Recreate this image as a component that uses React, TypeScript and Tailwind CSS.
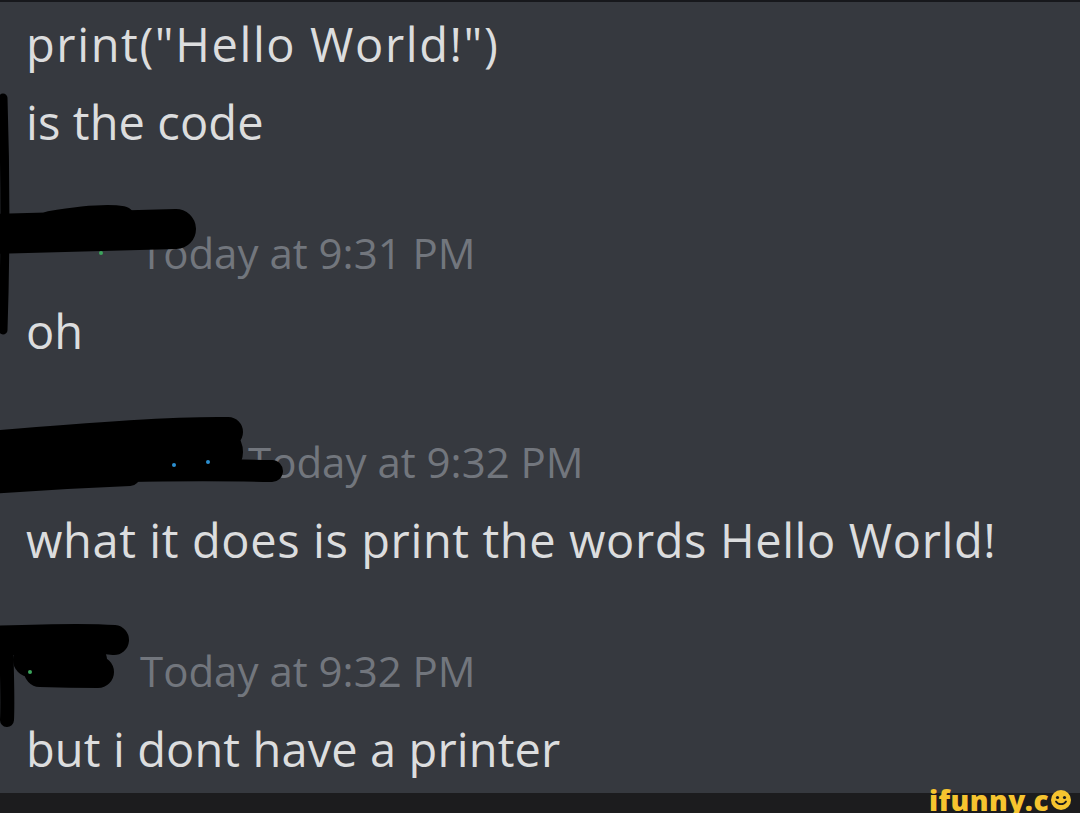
import React from 'react';

type Msg = {
  nameWidth: number;
  time: string;
  lines: string[];
};

const messages: Msg[] = [
  { nameWidth: 0, time: '', lines: ['print("Hello World!")', 'is the code'] },
  { nameWidth: 114, time: 'Today at 9:31 PM', lines: ['oh'] },
  { nameWidth: 222, time: 'Today at 9:32 PM', lines: ['what it does is print the words Hello World!'] },
  { nameWidth: 114, time: 'Today at 9:32 PM', lines: ['but i dont have a printer'] },
];

// the black marker redactions drawn over usernames / avatars
function Scribbles() {
  return (
    <svg
      className="absolute inset-0 pointer-events-none"
      width="1080"
      height="813"
      viewBox="0 0 1080 813"
      fill="none"
      stroke="#000"
      strokeLinecap="round"
      strokeLinejoin="round"
    >
      {/* left edge stroke */}
      <path d="M3 98 C 5 160, 6 240, 3 330" strokeWidth="9" />
      {/* first name */}
      <path d="M-10 234 C 60 232, 130 230, 176 229" strokeWidth="40" />
      <path d="M50 224 C 80 219, 105 216, 122 219" strokeWidth="26" />
      <circle cx="101" cy="253" r="2" fill="#3ba55c" stroke="none" />
      {/* second name */}
      <path d="M-10 462 C 60 456, 140 452, 215 452" strokeWidth="56" />
      <path d="M-10 446 C 80 438, 170 431, 228 432" strokeWidth="30" />
      <path d="M120 471 C 180 470, 230 470, 272 471" strokeWidth="22" />
      <path d="M-10 484 C 30 481, 80 478, 130 476" strokeWidth="20" />
      <circle cx="174" cy="465" r="2" fill="#2b8fd0" stroke="none" />
      <circle cx="208" cy="462" r="2" fill="#2b8fd0" stroke="none" />
      {/* third name */}
      <path d="M-10 641 C 40 639, 90 638, 114 640" strokeWidth="30" />
      <path d="M30 660 C 60 660, 80 660, 90 660" strokeWidth="34" />
      <path d="M40 671 C 70 672, 90 672, 98 672" strokeWidth="32" />
      <path d="M6 640 C 7 670, 8 700, 7 720" strokeWidth="14" />
      <circle cx="30" cy="672" r="2" fill="#3ba55c" stroke="none" />
    </svg>
  );
}

function Smiley() {
  return (
    <svg width="22" height="22" viewBox="0 0 22 22" className="inline-block ml-[1px]">
      <circle cx="11" cy="11" r="10" fill="#f6c42f" />
      <circle cx="7.5" cy="8.5" r="1.6" fill="#1c1c1e" />
      <circle cx="14.5" cy="8.5" r="1.6" fill="#1c1c1e" />
      <path d="M6 12.5 C 8 16, 14 16, 16 12.5" stroke="#1c1c1e" strokeWidth="1.8" fill="none" strokeLinecap="round" />
    </svg>
  );
}

export default function App() {
  return (
    <div className="relative w-[1080px] h-[813px] overflow-hidden bg-[#36393f] flex flex-col font-['Open_Sans',sans-serif]">
      <div className="h-[2px] bg-[#17181c]" />

      {/* chat */}
      <div className="flex-1 pt-[3px] pl-[26px]">
        {messages.map((m, i) => (
          <div key={i} className={i === 0 ? '' : 'mt-[53px]'}>
            {m.time && (
              <div className="flex items-baseline text-[42px] leading-[78px] text-[#72767d] whitespace-nowrap">
                <span className="inline-block" style={{ width: m.nameWidth }} />
                <span>{m.time}</span>
              </div>
            )}
            {m.lines.map((l, j) => (
              <div
                key={j}
                className={`text-[47px] leading-[78px] text-[#dcddde] whitespace-nowrap ${
                  l.startsWith('print(') ? 'tracking-[1.6px]' : l.startsWith('what') ? 'tracking-[0.6px]' : 'tracking-[0.1px]'
                }`}
              >
                {l}
              </div>
            ))}
          </div>
        ))}
      </div>

      {/* watermark bar */}
      <div className="h-[20px] bg-[#1c1c1e] relative">
        <div className="absolute right-[8px] top-[-8px] flex items-center text-[#f6c42f] font-['Noto_Sans',sans-serif] font-black text-[28px] leading-[30px] tracking-[0.5px]">
          <span>ifunny.c</span>
          <Smiley />
        </div>
      </div>

      <Scribbles />
    </div>
  );
}
